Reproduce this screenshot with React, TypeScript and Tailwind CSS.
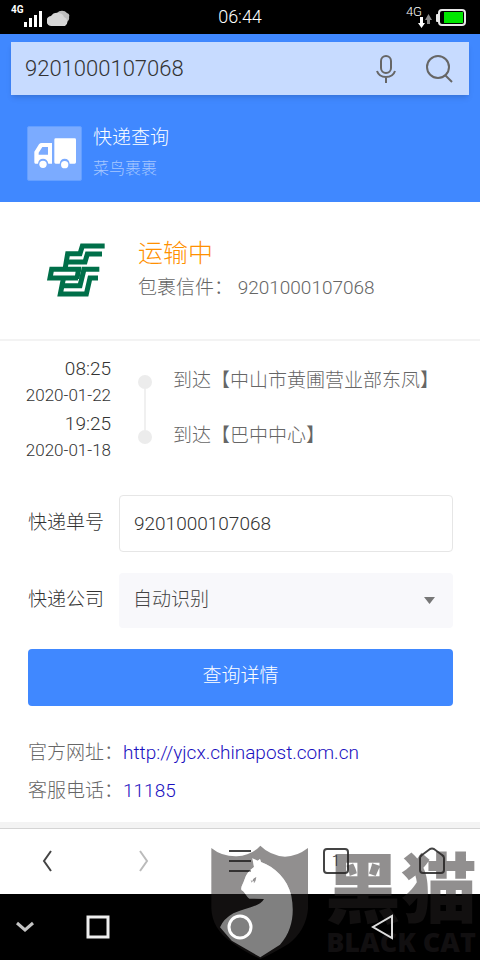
import { useState } from 'react';
import type { ReactNode } from 'react';

interface TrackEvent {
  time: string;
  date: string;
  text: string;
}

const events: TrackEvent[] = [
  { time: '08:25', date: '2020-01-22', text: '到达【中山市黄圃营业部东凤】' },
  { time: '19:25', date: '2020-01-18', text: '到达【巴中中心】' },
];

function StatusBar() {
  return (
    <div className="relative flex h-[34px] items-center justify-between bg-black text-white">
      <div className="flex h-full items-start pl-[11px] pt-1">
        <span className="font-['Roboto'] text-[10px] leading-3 font-bold">4G</span>
        <svg className="mt-[7px]" width="20" height="18" viewBox="0 0 20 18" fill="#fff">
          <rect x="0" y="11" width="3" height="5" />
          <rect x="5" y="7" width="3" height="9" />
          <rect x="10" y="4" width="3" height="12" />
          <rect x="15" y="0" width="3" height="16" />
        </svg>
        <svg className="mt-1 ml-[3px]" width="23" height="19" viewBox="0 0 23 19">
          <path d="M10 5a6 5 0 0 1 10 0 3 3 0 0 1 2 4 4 4 0 0 1-3 5z" fill="#bdbdbd" />
          <path d="M5 18a5 5 0 0 1-1-10 7 6 0 0 1 13 1 5 5 0 0 1 1 9z" fill="#d6d6d6" />
        </svg>
      </div>
      <span className="absolute inset-x-0 text-center text-lg leading-[36px] font-light">06:44</span>
      <div className="flex h-full items-start pt-1 pr-3.5">
        <span className="-mr-1 text-[13px] leading-4 font-light">4G</span>
        <svg className="mt-2.5" width="14" height="16" viewBox="0 0 14 16">
          <path d="M2 3h3v6h2l-3.500 5L0 9h2z" fill="#fff" />
          <path d="M9 10V6H7l3.500-6L14 6h-2v4z" fill="#8a8a8a" />
        </svg>
        <svg className="mt-1 ml-1" width="30" height="19" viewBox="0 0 30 19">
          <rect x="0" y="6" width="4" height="8" rx="1" fill="#e8e8e8" />
          <rect x="3" y="2" width="26" height="15" rx="3" stroke="#e8e8e8" strokeWidth="2" fill="#000" />
          <rect x="8" y="4" width="19" height="11" fill="#00e600" />
        </svg>
      </div>
    </div>
  );
}

function TruckIcon() {
  return (
    <svg width="42" height="32" viewBox="0 0 126 96" fill="none">
      <path
        d="M61 5q0-4 4-4h57q4 0 4 4v68q0 4-4 4h-15q-2-15-15-15T77 77H65q-4 0-4-4z"
        fill="#fff"
      />
      <path
        fillRule="evenodd"
        d="M54 15v62H43Q40 62 27 62T12 77H4q-3 0-3-4V41l14-22q3-4 8-4zM42 27H25L14 44v6h28z"
        fill="#fff"
      />
      <circle cx="27" cy="79" r="11" fill="#fff" />
      <circle cx="92" cy="80" r="11" fill="#fff" />
    </svg>
  );
}

function ChinaPostLogo() {
  return (
    <svg width="64" height="60" viewBox="0 0 192 180" fill="none" stroke="#006f49" strokeWidth="15">
      <path d="M182 18h-67l-7 23H71l-8 47" />
      <path d="M174 42h-44l-7 24H64" />
      <path d="M112 88H23l-5 26h84M104 86l-5 30" />
      <path d="M166 88h-46l-12 49H56" />
      <path d="M162 114h-24l-11 48H49l10-50" />
    </svg>
  );
}

function Watermark() {
  return (
    <div className="pointer-events-none absolute right-0 bottom-0 flex items-end text-[#231f20]/50">
      <svg width="102" height="116" viewBox="30 70 306 348">
        <path
          fill="#231f20"
          fillOpacity="0.5"
          fillRule="evenodd"
          d="M34 82q32 26 76 25 45-3 71-32 29 29 74 33 35 0 69-26v183q-6 65-59 105-50 30-84 45-41-17-86-50-59-40-61-103zM157 113l5 26c-13 9-24 21-28 36-4 15-14 25-9 34 11 6 13 19 23 25l44 1c-12 23-57 27-92 43q-30 17-40 42l35 40 86 50 59-38c38-42 44-97 34-147-12-50-49-86-91-101l-3-9-7 5z"
        />
        <path
          fill="#fff"
          fillOpacity="0.5"
          d="M157 113l5 26c-13 9-24 21-28 36-4 15-14 25-9 34 11 6 13 19 23 25l44 1c-12 23-57 27-92 43q-30 17-40 42l35 40 86 50 59-38c38-42 44-97 34-147-12-50-49-86-91-101l-3-9-7 5z"
        />
        <path d="M152 177l4 5-1 5zM157 184q0-12 12-14-1 12-8 18l2-8z" fill="#918f90" />
      </svg>
      <div className="flex w-[168px] flex-col items-center pl-2.5">
        <span className="mb-1 font-['Noto_Sans_CJK_SC'] text-[76px] leading-[72px] font-black whitespace-nowrap">黑猫</span>
        <span className="font-['Open_Sans'] text-[27px] leading-9 font-extrabold whitespace-nowrap">BLACK CAT</span>
      </div>
    </div>
  );
}

function NavButton({ label, children }: { label: string; children: ReactNode }) {
  return (
    <button aria-label={label} className="flex flex-1 items-center justify-center pb-0.5">
      <svg width="32" height="32" viewBox="0 0 32 32" fill="none" stroke="#444" strokeWidth="2">
        {children}
      </svg>
    </button>
  );
}

function BottomBars() {
  return (
    <footer className="relative">
      <nav className="flex h-[66px] border-t border-[#d4d4d4] bg-white">
        <NavButton label="后退">
          <path d="M19 6l-7 10 7 10" />
        </NavButton>
        <NavButton label="前进">
          <path d="M12 6l7 10-7 10" stroke="#bbb" />
        </NavButton>
        <NavButton label="菜单">
          <path d="M5 6h22M5 16h22M5 26h22" />
        </NavButton>
        <NavButton label="标签页">
          <rect x="4" y="4" width="24" height="24" rx="3" />
          <text x="16" y="21" textAnchor="middle" fontSize="15" fill="#333" stroke="none">1</text>
        </NavButton>
        <NavButton label="主页">
          <path d="M4 13q0-2 2-3l8-6q2-1 4 0l8 6q2 1 2 3v12q0 3-3 3H7q-3 0-3-3z" />
        </NavButton>
      </nav>
      <div className="flex h-[66px] items-center bg-black">
        <button aria-label="收起" className="flex w-[50px] justify-center">
          <svg width="18" height="12" viewBox="0 0 18 12" fill="none" stroke="#c4c4c4" strokeWidth="3">
            <path d="M1 2l8 7 8-7" />
          </svg>
        </button>
        <div className="flex flex-1 justify-between pr-[85px] pl-[35px]">
          <button aria-label="最近任务">
            <svg width="26" height="26" viewBox="0 0 26 26" fill="none" stroke="#eee" strokeWidth="3">
              <rect x="3" y="3" width="20" height="20" />
            </svg>
          </button>
          <button aria-label="主屏幕" className="relative z-10">
            <svg width="28" height="28" viewBox="0 0 28 28" fill="none" stroke="#fff" strokeWidth="3">
              <circle cx="14" cy="14" r="11" />
            </svg>
          </button>
          <button aria-label="返回" className="relative z-10">
            <svg width="26" height="28" viewBox="0 0 26 28" fill="none" stroke="#ddd" strokeWidth="2">
              <path d="M23 3v22L4 14z" />
            </svg>
          </button>
        </div>
      </div>
      <Watermark />
    </footer>
  );
}

export default function App() {
  const [query, setQuery] = useState('9201000107068');
  const [trackingNo, setTrackingNo] = useState('9201000107068');

  return (
    <div className="flex min-h-screen flex-col bg-[#f3f3f3] font-['Roboto','Noto_Sans_CJK_SC',sans-serif] text-[19px] font-light text-[#333]">
      <StatusBar />

      {/* Search header */}
      <header className="bg-[#4088ff] px-[11px] pt-2 pb-[21px]">
        <form className="flex h-[53px] items-center bg-[#c7dbff] pr-4 pl-3.5 shadow-md" onSubmit={(e) => e.preventDefault()}>
          <input
            aria-label="搜索"
            value={query}
            onChange={(e) => setQuery(e.target.value)}
            className="min-w-0 flex-1 bg-transparent text-[22px] outline-none"
          />
          <button type="button" aria-label="语音搜索" className="mr-[29px]">
            <svg width="20" height="28" viewBox="0 0 20 28" fill="none" stroke="#666" strokeWidth="2">
              <rect x="5" y="1" width="10" height="17" rx="5" />
              <path d="M1 16q2 6 9 6t9-6M10 22v6" />
            </svg>
          </button>
          <button type="submit" aria-label="搜索">
            <svg width="28" height="28" viewBox="0 0 28 28" fill="none" stroke="#666" strokeWidth="2">
              <circle cx="13" cy="12" r="11" />
              <path d="M20 20l7 7" />
            </svg>
          </button>
        </form>
        <div className="mt-[31px] flex h-[55px] gap-[11px] pl-4">
          <div className="flex size-[55px] items-center justify-center rounded-xs border border-[#649fff] bg-[#7babff]">
            <TruckIcon />
          </div>
          <div className="-mt-[3px]">
            <h1 className="leading-[30px] text-white">快递查询</h1>
            <p className="text-base leading-8 text-[#a6c7ff]">菜鸟裹裹</p>
          </div>
        </div>
      </header>

      <main className="mb-1.5 flex-1 bg-white">
        {/* Parcel status */}
        <section className="flex h-[139px] items-center gap-[30px] border-b-2 border-[#f3f3f3] pb-0.5 pl-11">
          <ChinaPostLogo />
          <div>
            <h2 className="text-[25px] leading-9 text-[#ff9000]">运输中</h2>
            <p className="leading-8 whitespace-pre text-[#666]">包裹信件： 9201000107068</p>
          </div>
        </section>

        <ol className="pt-[13px] pl-7">
          {events.map((event, i) => (
            <li key={event.date} className="flex h-[55px] items-center">
              <div className="flex w-[83px] flex-col items-end leading-[26px]">
                <div>{event.time}</div>
                <div className="text-[17px] whitespace-nowrap">{event.date}</div>
              </div>
              <div className="relative mr-[21px] ml-[27px] size-3.5 rounded-full bg-[#ececec]">
                {i < events.length - 1 && (
                  <span className="absolute top-3.5 left-1.5 h-[41px] w-0.5 bg-[#f0f0f0]" />
                )}
              </div>
              <p className="text-[#666]">{event.text}</p>
            </li>
          ))}
        </ol>

        {/* Query form */}
        <form className="mt-[31px] px-7 pr-[27px]" onSubmit={(e) => e.preventDefault()}>
          <div className="flex items-center">
            <label htmlFor="tracking-no" className="w-[91px] shrink-0">快递单号</label>
            <input
              id="tracking-no"
              value={trackingNo}
              onChange={(e) => setTrackingNo(e.target.value)}
              className="h-[57px] min-w-0 flex-1 rounded border border-[#e6e6e6] px-3.5 outline-none"
            />
          </div>
          <div className="mt-[21px] flex items-center">
            <label htmlFor="company" className="w-[91px] shrink-0">快递公司</label>
            <div className="relative flex-1">
              <select id="company" className="h-[55px] w-full appearance-none rounded bg-[#f8f8fb] px-3.5 text-[#444]">
                <option>自动识别</option>
              </select>
              <svg className="pointer-events-none absolute top-6 right-[18px]" width="11" height="7" viewBox="0 0 11 7" fill="#777">
                <path d="M0 0h11L5.500 7z" />
              </svg>
            </div>
          </div>
          <button type="submit" className="mt-[21px] h-[57px] w-full rounded bg-[#4088ff] pb-0.5 text-white">
            查询详情
          </button>
        </form>

        <div className="mt-7 pb-2 pl-7 leading-[38px] text-[#666]">
          <p>
            官方网址：
            <a href="http://yjcx.chinapost.com.cn" className="text-[#1a0fc0]">http://yjcx.chinapost.com.cn</a>
          </p>
          <p>
            客服电话：
            <a href="tel:11185" className="text-[#1a0fc0]">11185</a>
          </p>
        </div>
      </main>

      <BottomBars />
    </div>
  );
}
